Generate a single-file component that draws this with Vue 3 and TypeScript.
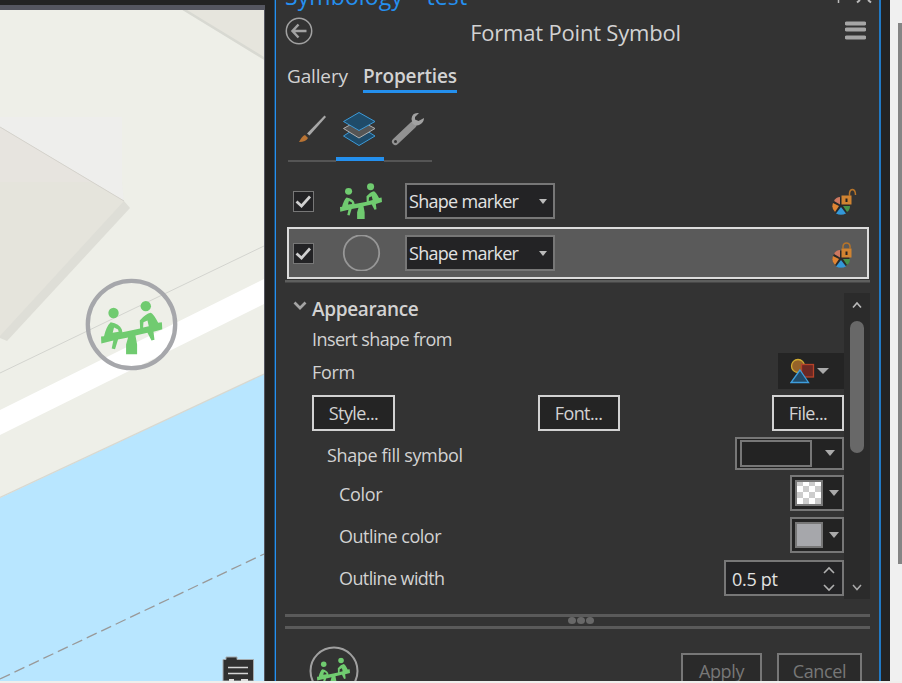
<script setup lang="ts">
import { ref } from 'vue'

interface Layer {
  name: string
  kind: 'seesaw' | 'circle'
  locked: boolean
  checked: boolean
}

const tabs = ['Gallery', 'Properties']
const activeTab = ref('Properties')
const layers = ref<Layer[]>([
  { name: 'Shape marker', kind: 'seesaw', locked: false, checked: true },
  { name: 'Shape marker', kind: 'circle', locked: true, checked: true },
])
const selected = ref(1)
const sources = ['Style...', 'Font...', 'File...']
const outlineWidth = ref('0.5 pt')
</script>

<template>
  <div class="screen">
    <svg class="defs" width="0" height="0">
      <symbol id="seesaw" viewBox="93 122 184 162" preserveAspectRatio="none">
        <circle cx="130.500" cy="159.500" r="15.500" />
        <circle cx="227" cy="139" r="15.500" />
        <path fill-rule="evenodd" d="M93 230L102 229Q109 199 122 187Q148 192 155 208L157 217L210 206L209 182Q226 162 242 159Q250 162 264 189L275 187L277 208L250 216L253 240L244 242L232 219L196 227L201 254V284H168V254L174 233L144 239L135 268L125 266L130 242L94 251ZM132 203L144 209L146 216L128 219ZM220 187L232 182L236 199L219 203Z" />
      </symbol>
      <symbol id="wheel" viewBox="0 0 26 26">
        <circle cx="9" cy="16" r="8.500" fill="#292929" />
        <path d="M8 14.500L2 11Q4 7 8 7Z" fill="#cd7860" />
        <path d="M7 16L1 13Q-1 18 3 22Z" fill="#df8433" />
        <path d="M9 17L4 23.500Q9 26 14 23.500Z" fill="#3498d8" />
        <path d="M11 16H18Q18 20 15 22Z" fill="#47934a" />
        <rect x="9.500" y="5.500" width="10" height="9" fill="#d08331" />
        <rect x="13.500" y="8.500" width="2" height="3.500" fill="#222" />
      </symbol>
    </svg>

    <main class="workspace">
      <section class="map-view">
        <svg class="map" viewBox="0 10 264 671">
          <rect y="10" width="264" height="671" fill="#eeefe8" />
          <path d="M183 10H264V60Z" fill="#e6e5dd" />
          <path d="M183 9L265 59" stroke="#d8d9d2" stroke-width="2.500" />
          <path d="M0 117H122V182L124 202L0 128Z" fill="#ededec" opacity=".8" />
          <path d="M0 127L124 201L130 208L7 341L0 338Z" fill="#deded7" />
          <path d="M0 127L124 201L0 336Z" fill="#e5e4dc" />
          <path d="M0 127L92 182H0Z" fill="#e7e4df" />
          <path d="M0 127L124 201" stroke="#d4d2cc" />
          <path d="M0 373L264 246" stroke="#d3d4cf" />
          <path d="M0 410L264 279V304L0 435Z" fill="#fff" />
          <path d="M0 498L264 374V681H0Z" fill="#b8e6ff" />
          <path d="M0 497.500L264 374" stroke="#d8d8d0" stroke-width="1.200" />
          <path d="M0 679L264 554" stroke="#999" stroke-width="1.300" stroke-dasharray="11 5" />
          <circle cx="131.500" cy="324.500" r="43.700" fill="none" stroke="#a6a7ab" stroke-width="4.300" />
          <use href="#seesaw" x="101" y="300.500" width="61.500" height="54" fill="#70cb70" />
          <path d="M223 681V659.500H226V657H237V659.500H253.500V681Z" fill="#303030" stroke="#a4aaad" />
          <path d="M228 667.500H248M228 673.500H248" stroke="#d5d5d5" stroke-width="1.400" />
          <path d="M229 680H234M241 680H248" stroke="#ddd" stroke-width="2" />
        </svg>
      </section>

      <section class="panel">
        <div class="dock-title">
          <span>Symbology - test</span>
          <svg width="50" height="5" viewBox="0 0 50 5"><path d="M10.500 0V3" stroke="#bbb" stroke-width="1.500" /><path d="M29 2.500L32 0M43 2.500L40 0" stroke="#bbb" stroke-width="2" /></svg>
        </div>

        <header class="header">
          <svg width="28" height="28" viewBox="0 0 28 28" fill="none" stroke="#a2a2a2">
            <circle cx="14" cy="14" r="12.700" stroke-width="1.500" />
            <path d="M21.500 14H8M13.500 7.500L7.500 14L13.500 20.500" stroke-width="2.500" />
          </svg>
          <h1>Format Point Symbol</h1>
          <svg class="menu" width="21" height="20" viewBox="0 0 21 20"><path d="M1.500 2.500H19.500M1.500 8.500H19.500M1.500 16.500H19.500" stroke="#a5a5a5" stroke-width="3.800" stroke-linecap="round" /></svg>
        </header>

        <nav class="tabs">
          <span v-for="t in tabs" :key="t" :class="['tab', { active: t === activeTab }]" @click="activeTab = t">{{ t }}</span>
        </nav>

        <nav class="modes">
          <span class="mode">
            <svg width="48" height="50" viewBox="288 107 48 50">
              <path d="M307 133.500L324.500 115.500L326 117L309.500 135.500Z" fill="#a7a7a7" />
              <path d="M305 135L308 138Q306 142 299 142Q302 136 305 135Z" fill="#b87333" />
            </svg>
          </span>
          <span class="mode active">
            <svg width="48" height="50" viewBox="336 107 48 50" stroke-width="1">
              <path d="M343.500 136L359 126L375 136L359 145.500Z" fill="#1f4b69" stroke="#3c9bd9" />
              <path d="M343.500 128.500L359 120L375 128.500L359 138Z" fill="#555" stroke="#b0b0b0" />
              <path d="M343.500 121.500L359 112.500L375 121.500L359 130.500Z" fill="#1f4b69" stroke="#3c9bd9" />
            </svg>
          </span>
          <span class="mode">
            <svg width="48" height="50" viewBox="384 107 48 50">
              <path d="M413 125L395.500 141.500" stroke="#929292" stroke-width="7" stroke-linecap="round" />
              <path d="M419 113Q412 112 411.500 119L412.500 123.500Q416 127 420 124.500Q424 122 424 118L418.500 121L415 119.500V117Z" fill="#a1a1a1" />
              <circle cx="395.500" cy="141.500" r="1.500" fill="#333" />
            </svg>
          </span>
        </nav>

        <ul class="layers">
          <li v-for="(l, i) in layers" :key="i" :class="['layer', { selected: i === selected }]" @click="selected = i">
            <span class="check">
              <svg v-if="l.checked" width="17" height="17" viewBox="0 0 17 17"><path d="M1.500 8.500L6.500 13L15 3.500" fill="none" stroke="#d0d0d0" stroke-width="2.700" /></svg>
            </span>
            <span class="thumb">
              <svg v-if="l.kind === 'seesaw'" width="42" height="36"><use href="#seesaw" width="42" height="36" fill="#70cb70" /></svg>
              <svg v-else width="42" height="36" viewBox="0 0 42 36"><circle cx="21.500" cy="18" r="17.700" fill="none" stroke="#979797" stroke-width="1.800" /></svg>
            </span>
            <span class="select">{{ l.name }}<i class="caret small" /></span>
            <svg class="lock" width="26" height="26" viewBox="0 0 26 26">
              <use href="#wheel" width="26" height="26" />
              <path :d="l.locked ? 'M11 6V3Q11.500 0 14.500 0Q17.500 0 18 3V6' : 'M17.500 6V3Q18 -.5 20.500 -.5Q23.500 0 23.500 5'" fill="none" stroke="#b77429" stroke-width="1.500" />
            </svg>
          </li>
        </ul>
        <div class="rule" />

        <div class="scroll-area">
          <div class="form">
            <h2>
              <svg width="14" height="10" viewBox="0 0 14 10"><path d="M1.500 1.500L7 7L12.500 1.500" fill="none" stroke="#a5a5a5" stroke-width="2.700" /></svg>
              Appearance
            </h2>
            <div class="row insert">Insert shape from</div>
            <div class="row shape-form">
              Form
              <span class="form-picker">
                <svg width="25" height="26" viewBox="0 0 25 26" stroke-width="1.300">
                  <circle cx="8" cy="8" r="6.500" fill="#956329" stroke="#d2ac31" />
                  <rect x="11.500" y="6.500" width="12" height="12.500" fill="#6c2823" stroke="#b64229" />
                  <path d="M10 12L18.500 24.500H1Z" fill="#214b69" stroke="#3e9ddd" />
                </svg>
                <i class="caret" />
              </span>
            </div>
            <div class="row sources">
              <button v-for="s in sources" :key="s">{{ s }}</button>
            </div>
            <div class="row fill-symbol">Shape fill symbol
              <span class="picker wide"><b class="swatch" /><i class="caret" /></span>
            </div>
            <div class="row color">Color
              <span class="picker"><b class="swatch checker" /><i class="caret" /></span>
            </div>
            <div class="row outline">Outline color
              <span class="picker"><b class="swatch gray" /><i class="caret" /></span>
            </div>
            <div class="row width">Outline width
              <span class="spinner">{{ outlineWidth }}
                <svg width="14" height="28" viewBox="0 0 14 28"><path d="M2 8L7 3L12 8M2 20L7 25L12 20" fill="none" stroke="#b0b0b0" stroke-width="1.600" /></svg>
              </span>
            </div>
          </div>
          <div class="scrollbar">
            <svg width="12" height="8" viewBox="0 0 12 8"><path d="M2 6.500L6 2L10 6.500" fill="none" stroke="#bbb" stroke-width="1.600" /></svg>
            <span class="thumb-bar" />
            <svg width="12" height="8" viewBox="0 0 12 8"><path d="M2 2L6 6.500L10 2" fill="none" stroke="#aaa" stroke-width="1.500" /></svg>
          </div>
        </div>

        <div class="splitter"><i /><i /><i /></div>

        <footer class="footer">
          <svg width="50" height="50" viewBox="0 0 50 50">
            <circle cx="25" cy="25" r="23.500" fill="none" stroke="#a0a0a0" stroke-width="2" />
            <use href="#seesaw" x="8" y="11.500" width="33" height="29" fill="#70cb70" />
          </svg>
          <div class="actions">
            <button class="apply">Apply</button>
            <button class="cancel">Cancel</button>
          </div>
        </footer>
      </section>

      <aside class="page-scroll"><span /></aside>
    </main>
  </div>
</template>

<style>
body {
  background: #f0eeec;
  overflow: hidden;
}
</style>

<style scoped>
* {
  box-sizing: border-box;
}
.screen {
  width: 902px;
  height: 683px;
  overflow: hidden;
  font-family: 'Open Sans', 'Noto Sans', sans-serif;
  font-size: 18px;
  letter-spacing: -0.35px;
  color: #d2d2d2;
  background: #f0eeec;
}
.defs {
  display: block;
}
.workspace {
  display: grid;
  grid-template-columns: 265px 607px 12px;
  column-gap: 9px;
  width: 902px;
  height: 681px;
  overflow: hidden;
  background: #232323;
}
.map-view {
  padding-top: 5px;
  overflow: hidden;
}
.map {
  display: block;
  width: 265px;
  height: 676px;
  border-top: 5px solid #555660;
  border-right: 1px solid #555660;
}
.panel {
  display: flex;
  flex-direction: column;
  height: 681px;
  overflow: hidden;
  margin-left: 1px;
  background: #333;
  border-left: 1px solid #2490f0;
  border-right: 2px solid #2179c4;
  box-shadow: -1px 0 #1f4a70;
}
.dock-title {
  display: flex;
  justify-content: space-between;
  flex: none;
  height: 15px;
  padding: 0 1px 0 9px;
  color: #2590f0;
  font-size: 23px;
  line-height: 30px;
  letter-spacing: 0.1px;
  word-spacing: 2px;
}
.dock-title span {
  margin-top: -19px;
}
.header {
  display: flex;
  align-items: center;
  flex: none;
  height: 32px;
  padding: 0 13px 0 9px;
}
h1 {
  flex: 1;
  margin: 1px 0 0 -7px;
  text-align: center;
  font-size: 22px;
  line-height: 28px;
  letter-spacing: -0.2px;
  font-weight: 400;
}
.menu {
  margin-top: -1px;
}
.tabs {
  display: flex;
  gap: 15px;
  flex: none;
  height: 45px;
  margin: 14px 0 0 11px;
  font-size: 19px;
  line-height: 30px;
  letter-spacing: -0.15px;
}
.tab {
  height: 32px;
}
.tab.active {
  border-bottom: 3px solid #2490ee;
  font-weight: 600;
}
.modes {
  display: flex;
  flex: none;
  width: 144px;
  height: 56px;
  margin: 1px 0 0 12px;
}
.mode {
  height: 55px;
  border-bottom: 2px solid #555;
}
.mode svg {
  display: block;
}
.mode.active {
  height: 54px;
  border-bottom: 4px solid #2490ee;
}
.layers {
  flex: none;
  margin: 12px 0 0 11px;
  padding: 0;
  width: 582px;
  list-style: none;
}
.layer {
  display: flex;
  align-items: center;
  height: 52px;
  padding: 0 9px 0 4px;
  border: 2px solid transparent;
}
.layer.selected {
  background: #5a5a5a;
  border-color: #dcdcdc;
}
.check {
  width: 21px;
  height: 21px;
  border: 1px solid #777;
  background: #232325;
}
.check svg {
  display: block;
  margin: 1px;
}
.thumb {
  width: 42px;
  height: 36px;
  margin-left: 26px;
}
.thumb svg {
  display: block;
}
.select {
  display: flex;
  align-items: center;
  justify-content: space-between;
  width: 150px;
  height: 36px;
  margin-left: 23px;
  padding: 0 6px 0 2px;
  border: 2px solid #777;
  background: #232325;
  color: #e2e2e2;
  letter-spacing: -0.7px;
}
.lock {
  margin: 4px 0 0 auto;
  overflow: visible;
}
.layer.selected .lock {
  margin-top: 6px;
}
.caret {
  width: 0;
  height: 0;
  border: solid transparent;
  border-width: 6px 6px 0;
  border-top-color: #aaa;
}
.caret.small {
  border-width: 5px 4px 0;
  border-top-color: #bbb;
}
.rule {
  flex: none;
  height: 3px;
  margin: 1px 9px 0;
  background: #5e5f5e;
  border-bottom: 1px solid #484848;
}
.scroll-area {
  display: grid;
  grid-template-columns: 532px 26px;
  flex: none;
  height: 306px;
  margin: 10px 9px 0 36px;
}
h2 {
  display: flex;
  align-items: center;
  gap: 5px;
  height: 32px;
  margin: 0 0 0 -19px;
  font-size: 19px;
  font-weight: 600;
}
h2 svg {
  margin-top: -6px;
}
.row {
  display: flex;
  align-items: center;
  justify-content: space-between;
}
.insert {
  height: 27px;
  letter-spacing: -0.57px;
}
.shape-form {
  height: 40px;
}
.form-picker {
  display: flex;
  align-items: center;
  gap: 2px;
  width: 66px;
  height: 36px;
  margin-top: -3px;
  padding-left: 12px;
  background: #242424;
}
button {
  height: 36px;
  padding: 0;
  border: 2px solid #d2d2d2;
  background: #242424;
  color: inherit;
  font: inherit;
  letter-spacing: inherit;
}
.sources {
  height: 42px;
  letter-spacing: -0.6px;
}
.sources button {
  width: 83px;
}
.sources button:nth-child(2) {
  width: 82px;
  margin-left: 71px;
}
.sources button:nth-child(3) {
  width: 72px;
  margin-left: 81px;
}
.fill-symbol {
  height: 38px;
  padding: 3px 0 0 15px;
}
.color {
  height: 42px;
  padding: 2px 0 0 27px;
}
.outline {
  height: 42px;
  padding: 2px 0 0 27px;
  letter-spacing: -0.5px;
}
.width {
  height: 42px;
  padding: 2px 0 0 27px;
  letter-spacing: -0.6px;
}
.picker {
  display: flex;
  align-items: center;
  justify-content: space-between;
  width: 54px;
  height: 36px;
  margin-top: -2px;
  padding: 3px;
  border: 2px solid #777;
  background: #232323;
}
.picker .caret {
  border-width: 6px 5px 0;
}
.picker.wide {
  width: 109px;
  height: 33px;
  margin-top: -3px;
  padding: 2px 7px 2px 3px;
}
.swatch {
  width: 28px;
  height: 26px;
  border: 2px solid #777;
}
.wide .swatch {
  width: 72px;
  height: 27px;
}
.checker {
  background: conic-gradient(#fff 25%, #ccc 0 50%, #fff 0 75%, #ccc 0) 0 -2px / 12px 12px;
}
.gray {
  background: #a6a7ab;
}
.spinner {
  display: flex;
  align-items: center;
  justify-content: space-between;
  width: 120px;
  height: 36px;
  padding: 1px 6px 0;
  border: 2px solid #777;
  background: #232325;
  color: #e2e2e2;
  letter-spacing: -0.3px;
}
.scrollbar {
  display: flex;
  flex-direction: column;
  align-items: center;
  padding: 8px 0;
  background: #2b2b2b;
}
.scrollbar svg:last-child {
  margin-top: auto;
}
.thumb-bar {
  width: 14px;
  height: 132px;
  margin-top: 12px;
  border-radius: 7px;
  background: #686868;
}
.splitter {
  display: flex;
  align-items: center;
  justify-content: center;
  gap: 1px;
  flex: none;
  height: 15px;
  margin: 15px 9px 0;
  padding: 0 0 2px 6px;
  border: solid #5a5a5a;
  border-width: 3px 0;
}
.splitter i {
  width: 8px;
  height: 7px;
  border-radius: 50%;
  background: #686868;
}
.footer {
  display: flex;
  justify-content: space-between;
  flex: none;
  margin: 17px 17px 0 33px;
}
.actions {
  display: flex;
  gap: 15px;
  margin-top: 7px;
}
.actions button {
  width: 81px;
  background: #2a2a2a;
  border-color: #777;
  color: #777;
}
.actions .cancel {
  width: 85px;
}
.page-scroll {
  background: #f0f0f0;
  padding: 23px 0 0 8px;
}
.page-scroll span {
  display: block;
  height: 541px;
  background: #858585;
}
</style>
